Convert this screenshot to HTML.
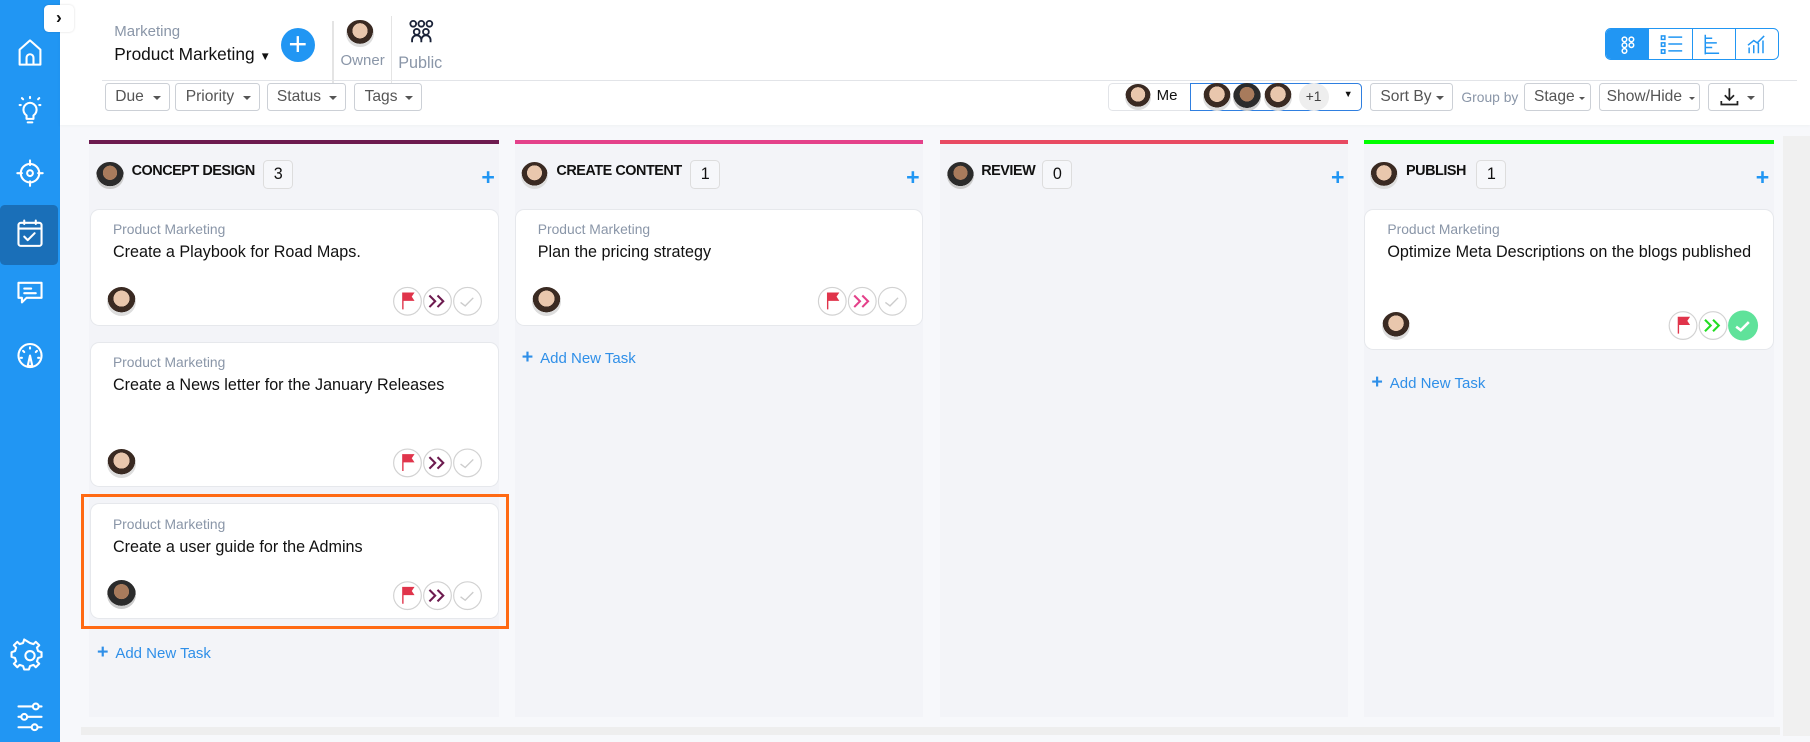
<!DOCTYPE html>
<html><head><meta charset="utf-8"><style>
*{box-sizing:border-box;margin:0;padding:0}
html,body{width:1810px;height:742px;overflow:hidden;background:#f7f8fb}
#w{zoom:1.15434;width:1568px;height:643px;position:relative;font-family:"Liberation Sans",sans-serif;color:#111}
.a{position:absolute}
.sb{left:0;top:0;width:52px;height:643px;background:#2196f3}
.hd{left:52px;top:0;width:1516px;height:108px;background:#fff;box-shadow:0 1px 3px rgba(0,0,0,.04)}
.btn{position:absolute;top:72px;height:24px;border:1px solid #ccd0d6;border-radius:3px;background:#fff;font-size:13.5px;color:#555;line-height:22px;padding-left:8px}
.btn:after{content:"";position:absolute;right:7px;top:10px;border:4px solid transparent;border-top:4px solid #555;border-bottom:0}
.btn.s:after{right:4px;top:11px;border-width:3px;border-top-width:3px}
.col{position:absolute;top:121px;height:500px;background:#f3f4f8}
.bar{height:4px}
.av{position:absolute;border-radius:50%;background:radial-gradient(circle at 50% 40%,#e9c7ad 0 35%,#3a2a22 36% 60%,#ddd 61%)}
.av.m{background:radial-gradient(circle at 50% 40%,#a87b5c 0 33%,#2b2b2b 34% 62%,#ccc 63%)}
.ttl{position:absolute;font-size:12.5px;font-weight:bold;top:141px;letter-spacing:-0.4px}
.cnt{position:absolute;top:139px;width:26px;height:25px;border:1px solid #ddd;border-radius:4px;background:#f6f7fa;text-align:center;line-height:23px;font-size:14px}
.pl{position:absolute;top:142px;color:#2196f3;font-size:20px;font-weight:bold}
.card{position:absolute;background:#fff;border:1px solid #e6e8ec;border-radius:8px}
.cat{position:absolute;left:19px;top:10px;font-size:12px;color:#8a96a8}
.tt{position:absolute;left:19px;top:29px;font-size:14px;color:#111}
.add{position:absolute;font-size:13px;color:#2f8fe8}
.add b{font-size:17px;margin-right:6px}
</style></head><body><div id="w">
<div class="a sb"></div>
<div class="a" style="left:0;top:178px;width:50px;height:52px;background:#1a6fb8;border-radius:4px"></div>
<svg class="a" style="left:0;top:0" width="52" height="643" fill="none" stroke="#fff" stroke-width="1.8" stroke-linecap="round" stroke-linejoin="round">
<path d="M17 56V43l9-8 9 8v13zM23 56v-6a3 3 0 0 1 6 0v6"/>
<path d="M26 89a6 6 0 0 0-3 11v3h6v-3a6 6 0 0 0-3-11zM24 106h4M26 85v-1M18 91h-1M35 91h-1M20 86l-1-1M33 86l1-1"/>
<circle cx="26" cy="150" r="8"/><circle cx="26" cy="150" r="2.5"/><path d="M26 139v4M26 157v4M15 150h4M33 150h4"/>
<rect x="16" y="193" width="20" height="20" rx="2"/><path d="M16 198h20M21 191v3M31 191v3M21 205l3 3 6-6"/>
<path d="M16 245h20v13H23l-4 4v-4h-3zM21 250h6M21 254h10"/>
<circle cx="26" cy="308" r="10"/><path d="M26 301v1M20 304l1 1M32 304l-1 1M18 310h1M34 310h-1M24 317l2-9 2 9z"/>
<circle cx="26" cy="568" r="4"/><path d="M26 557l3 1 2-2 3 3-2 2 1 3 3 1v4l-3 1-1 3 2 2-3 3-2-2-3 1-1 3h-4l-1-3-3-1-2 2-3-3 2-2-1-3-3-1v-4l3-1 1-3-2-2 3-3 2 2 3-1 1-3z"/>
<path d="M16 612h20M16 621h20M16 630h20"/><circle cx="31" cy="612" r="2.5" fill="#2196f3"/><circle cx="21" cy="621" r="2.5" fill="#2196f3"/><circle cx="30" cy="630" r="2.5" fill="#2196f3"/>
</svg>
<div class="a hd"></div>
<div class="a" style="left:38px;top:4px;width:26px;height:24px;background:#fff;border-radius:4px;box-shadow:0 0 2px rgba(0,0,0,.15);font-size:15px;font-weight:bold;text-align:center;line-height:22px">›</div>
<div class="a" style="left:99px;top:20px;font-size:13px;color:#8a96a8">Marketing</div>
<div class="a" style="left:99px;top:38px;font-size:15px;color:#111">Product Marketing <span style="font-size:10px">▼</span></div>
<div class="a" style="left:243px;top:24px;width:30px;height:30px;border-radius:50%;background:#2196f3;color:#fff;font-size:28px;line-height:28px;text-align:center">+</div>
<div class="a" style="left:288px;top:18px;width:1px;height:62px;background:#e4e4e4"></div>
<div class="av" style="left:300px;top:17px;width:24px;height:24px"></div>
<div class="a" style="left:295px;top:45px;font-size:13px;color:#8a96a8">Owner</div>
<div class="a" style="left:339px;top:14px;width:1px;height:66px;background:#e4e4e4"></div>
<svg class="a" style="left:350px;top:16px" width="30" height="24" fill="none" stroke="#1a2238" stroke-width="1.6"><circle cx="8" cy="5" r="2.5"/><circle cx="15" cy="5" r="2.5"/><circle cx="22" cy="5" r="2.5"/><circle cx="11" cy="12" r="2.5"/><circle cx="19" cy="12" r="2.5"/><path d="M7 21v-2a4 4 0 0 1 8 0v2M15 21v-2a4 4 0 0 1 8 0v2"/></svg>
<div class="a" style="left:345px;top:47px;font-size:14px;color:#8a96a8">Public</div>
<div class="a" style="left:88px;top:69px;width:1469px;height:1px;background:#e2e4e8"></div>
<div class="btn" style="left:91px;width:56px">Due</div>
<div class="btn" style="left:152px;width:73px">Priority</div>
<div class="btn" style="left:231px;width:69px">Status</div>
<div class="btn" style="left:307px;width:59px">Tags</div>
<div class="a" style="left:960px;top:72px;width:220px;height:24px;border:1px solid #e2e4e8;border-radius:4px;background:#fff"></div>
<div class="av" style="left:975px;top:73px;width:22px;height:22px"></div>
<div class="a" style="left:1002px;top:75px;font-size:13px">Me</div>
<div class="a" style="left:1031px;top:72px;width:149px;height:24px;border:1px solid #2f7fe0;border-radius:0 4px 4px 0"></div>
<div class="av" style="left:1042px;top:72px;width:24px;height:24px"></div>
<div class="av m" style="left:1068px;top:72px;width:24px;height:24px"></div>
<div class="av" style="left:1095px;top:72px;width:24px;height:24px"></div>
<div class="a" style="left:1125px;top:72px;width:26px;height:24px;border-radius:50%;background:#eee;font-size:12px;color:#444;text-align:center;line-height:24px">+1</div>
<div class="a" style="left:1164px;top:77px;font-size:8px">▼</div>
<div class="btn" style="left:1187px;width:72px">Sort By</div>
<div class="a" style="left:1266px;top:77px;font-size:12px;color:#8a96a8">Group by</div>
<div class="btn s" style="left:1320px;width:58px">Stage</div>
<div class="btn s" style="left:1385px;width:88px;padding-left:6px">Show/Hide</div>
<div class="btn" style="left:1480px;width:48px"><svg width="18" height="18" style="margin-top:2px" fill="none" stroke="#222" stroke-width="1.5"><path d="M9 2v10M5 8l4 4 4-4M2 13v3h14v-3"/></svg></div>
<div class="a" style="left:1390px;top:24px;width:151px;height:28px;border:1px solid #2196f3;border-radius:5px;background:#fff;overflow:hidden">
<div class="a" style="left:0;top:0;width:38px;height:28px;background:#2196f3"></div>
<div class="a" style="left:75px;top:0;width:1px;height:28px;background:#2196f3"></div>
<div class="a" style="left:112px;top:0;width:1px;height:28px;background:#2196f3"></div>
<svg class="a" style="left:0;top:0" width="151" height="28" fill="none" stroke-width="1.3"><g stroke="#fff"><circle cx="16" cy="9" r="2"/><circle cx="22" cy="9" r="2"/><circle cx="16" cy="14" r="2"/><circle cx="22" cy="14" r="2"/><circle cx="16" cy="19" r="2"/></g><g stroke="#2196f3"><rect x="48" y="6" width="3" height="3"/><rect x="48" y="12" width="3" height="3"/><rect x="48" y="18" width="3" height="3"/><path d="M54 7h12M54 13h12M54 19h12M86 5v17M86 8h6M86 12h10M86 16h6M86 21h12M124 21v-5M128 21v-7M132 21v-9M136 21v-11M123 14l5-4 3 2 6-6"/></g></svg>
</div>
<div class="col" style="left:77px;width:355px"><div class="bar" style="background:#6d1b4f"></div></div>
<div class="col" style="left:446px;width:354px"><div class="bar" style="background:#e4418a"></div></div>
<div class="col" style="left:814px;width:354px"><div class="bar" style="background:#e84a62"></div></div>
<div class="col" style="left:1182px;width:355px"><div class="bar" style="background:#00ff00"></div></div>
<div class="a" style="left:1545px;top:118px;width:23px;height:520px;background:#f0f0f0"></div>
<div class="a" style="left:70px;top:630px;width:1472px;height:7px;background:#eeeeee"></div>

<div class="av m" style="left:83px;top:140px;width:24px;height:24px"></div><div class="ttl" style="left:114px">CONCEPT DESIGN</div><div class="cnt" style="left:228px">3</div><div class="pl" style="left:417px">+</div>
<div class="av" style="left:451px;top:140px;width:24px;height:24px"></div><div class="ttl" style="left:482px">CREATE CONTENT</div><div class="cnt" style="left:598px">1</div><div class="pl" style="left:785px">+</div>
<div class="av m" style="left:820px;top:140px;width:24px;height:24px"></div><div class="ttl" style="left:850px">REVIEW</div><div class="cnt" style="left:903px">0</div><div class="pl" style="left:1153px">+</div>
<div class="av" style="left:1187px;top:140px;width:24px;height:24px"></div><div class="ttl" style="left:1218px">PUBLISH</div><div class="cnt" style="left:1279px">1</div><div class="pl" style="left:1521px">+</div>

<div class="a" style="left:70px;top:428px;width:371px;height:117px;border:3px solid #ff6a13"></div>

<div class="card" style="left:78px;top:181px;width:354px;height:101px"><div class="cat">Product Marketing</div><div class="tt">Create a Playbook for Road Maps.</div><div class="av" style="left:14px;top:67px;width:25px;height:25px"></div></div>
<div class="card" style="left:78px;top:296px;width:354px;height:126px"><div class="cat">Product Marketing</div><div class="tt">Create a News letter for the January Releases</div><div class="av" style="left:14px;top:92px;width:25px;height:25px"></div></div>
<div class="card" style="left:78px;top:436px;width:354px;height:100px"><div class="cat">Product Marketing</div><div class="tt">Create a user guide for the Admins</div><div class="av m" style="left:14px;top:66px;width:25px;height:25px"></div></div>
<div class="card" style="left:446px;top:181px;width:354px;height:101px"><div class="cat">Product Marketing</div><div class="tt">Plan the pricing strategy</div><div class="av" style="left:14px;top:67px;width:25px;height:25px"></div></div>
<div class="card" style="left:1182px;top:181px;width:355px;height:122px"><div class="cat">Product Marketing</div><div class="tt">Optimize Meta Descriptions on the blogs published</div><div class="av" style="left:14px;top:88px;width:25px;height:25px"></div></div>

<svg class="a" style="left:0;top:0" width="1568" height="643" fill="none" stroke-width="1.8">
<g id="s1">
<circle cx="353" cy="261" r="12" fill="#fff" stroke="#d2d2d2" stroke-width="1"/><path d="M349 268v-14h9l-2 3 2 3h-9" fill="#e0344b" stroke="#e0344b" stroke-width="1.2"/>
<circle cx="379" cy="261" r="12" fill="#fff" stroke="#d2d2d2" stroke-width="1"/><path d="M372 256l5 5-5 5M379 256l5 5-5 5" stroke="#6d1b4f"/>
<circle cx="405" cy="261" r="12" fill="#fff" stroke="#d2d2d2" stroke-width="1"/><path d="M399 262l4 3 7-7" stroke="#ccc" stroke-width="1.2"/>
</g>
<use href="#s1" y="140"/>
<use href="#s1" y="255"/>
<g transform="translate(368,0)"><circle cx="353" cy="261" r="12" fill="#fff" stroke="#d2d2d2" stroke-width="1"/><path d="M349 268v-14h9l-2 3 2 3h-9" fill="#e0344b" stroke="#e0344b" stroke-width="1.2"/>
<circle cx="379" cy="261" r="12" fill="#fff" stroke="#d2d2d2" stroke-width="1"/><path d="M372 256l5 5-5 5M379 256l5 5-5 5" stroke="#e4418a"/>
<circle cx="405" cy="261" r="12" fill="#fff" stroke="#d2d2d2" stroke-width="1"/><path d="M399 262l4 3 7-7" stroke="#ccc" stroke-width="1.2"/></g>
<g transform="translate(1105,21)"><circle cx="353" cy="261" r="12" fill="#fff" stroke="#d2d2d2" stroke-width="1"/><path d="M349 268v-14h9l-2 3 2 3h-9" fill="#e0344b" stroke="#e0344b" stroke-width="1.2"/>
<circle cx="379" cy="261" r="12" fill="#fff" stroke="#d2d2d2" stroke-width="1"/><path d="M372 256l5 5-5 5M379 256l5 5-5 5" stroke="#22dd22"/>
<circle cx="405" cy="261" r="13" fill="#5fe29a"/><path d="M399 262l4 3 7-7" stroke="#fff" stroke-width="2.2"/></g>
</svg>

<div class="add" style="left:84px;top:555px"><b>+</b>Add New Task</div>
<div class="add" style="left:452px;top:300px"><b>+</b>Add New Task</div>
<div class="add" style="left:1188px;top:321px"><b>+</b>Add New Task</div>
</div></body></html>
